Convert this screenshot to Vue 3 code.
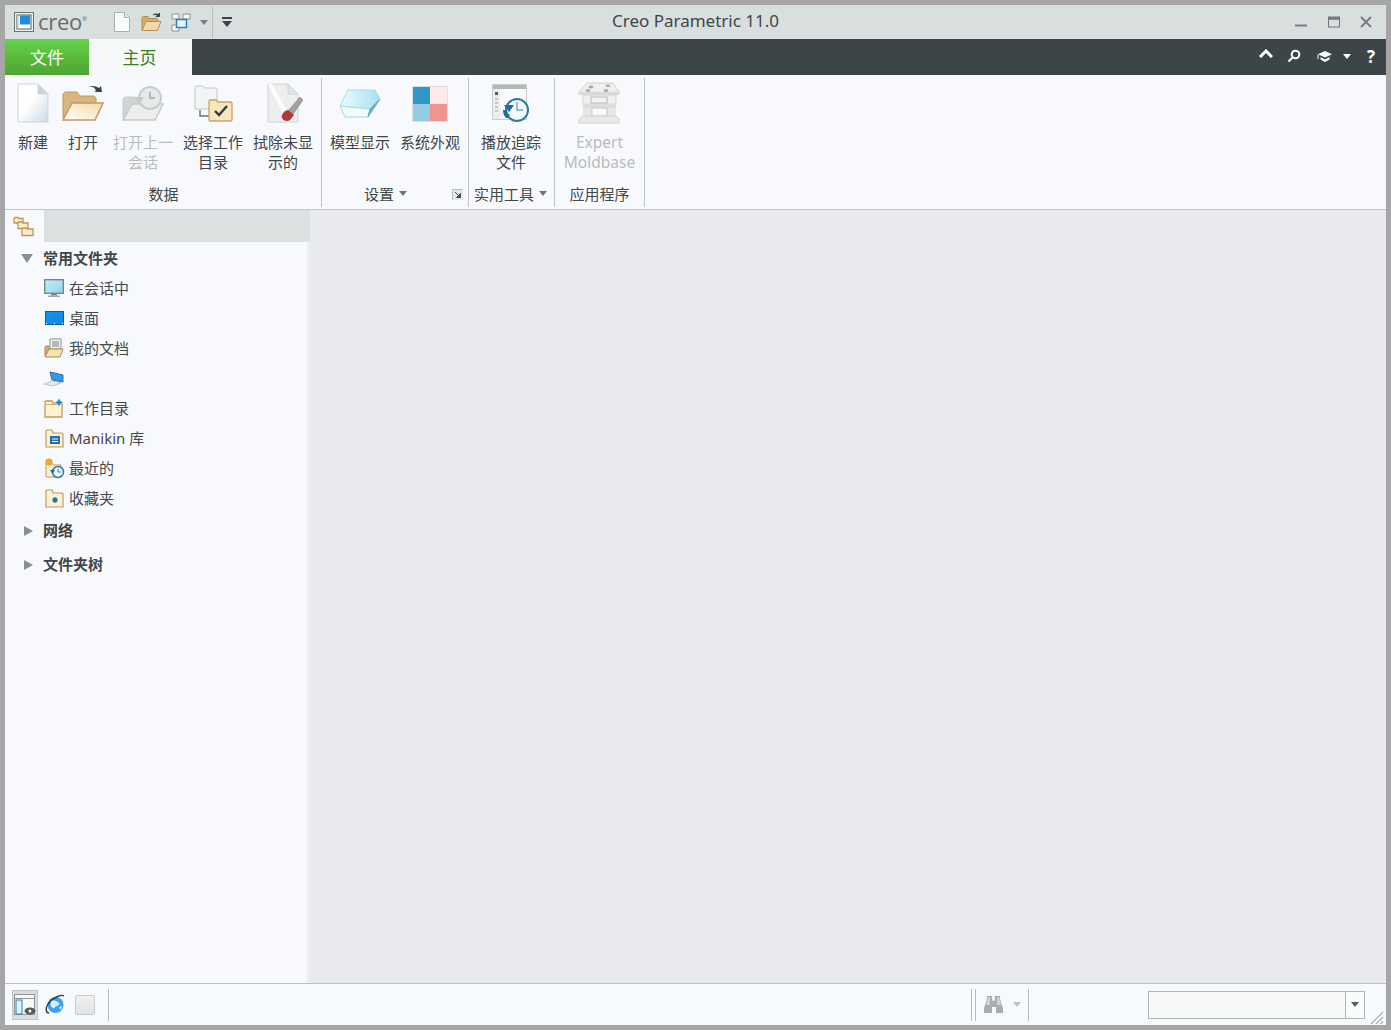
<script setup>
const data = [
  { icon: 'new', lines: ['新建'], w: 50 },
  { icon: 'open', lines: ['打开'], w: 50 },
  { icon: 'last', lines: ['打开上一', '会话'], w: 70, off: true },
  { icon: 'wd', lines: ['选择工作', '目录'], w: 70 },
  { icon: 'erase', lines: ['拭除未显', '示的'], w: 70 }
]
const items = [
  { icon: 'session', t: '在会话中' },
  { icon: 'desktop', t: '桌面' },
  { icon: 'docs', t: '我的文档' },
  { icon: 'pc', t: '' },
  { icon: 'work', t: '工作目录' },
  { icon: 'manikin', t: 'Manikin 库' },
  { icon: 'recent', t: '最近的' },
  { icon: 'fav', t: '收藏夹' }
]
</script>

<template>
  <div class="frame">
    <div class="win">
      <header class="titlebar">
        <div class="tb-left">
          <svg class="logo" width="20" height="20" viewBox="0 0 20 20">
            <rect x=".5" y=".5" width="19" height="19" fill="#eef1f1" stroke="#6c7274" />
            <rect x="3" y="3" width="14" height="14" fill="#fff" stroke="#50585a" />
            <rect x="6" y="3.500" width="10" height="9" fill="#1c8fd8" />
            <rect x="3.500" y="3.500" width="2" height="13" fill="#dfe3e3" />
          </svg>
          <span class="creo">creo<sup>®</sup></span>
          <svg class="qa q1" width="18" height="20" viewBox="0 0 18 20">
            <path d="M1.500.5h10l5 5v14h-15z" fill="#fbfcfc" stroke="#a9b0b2" />
            <path d="M11.500.5v5h5" fill="#dfe6ea" stroke="#a9b0b2" />
          </svg>
          <svg class="qa q2" width="21" height="20" viewBox="0 0 21 20">
            <path d="M1 18V5.500l1-1h5l1.500 2H16l1 1V10H6z" fill="#d4ad70" stroke="#b78f55" />
            <path d="M1 18.500 5 9.500h15l-3.500 9z" fill="#f3d9a7" stroke="#b78f55" />
            <path d="M12 3c2-1.500 4-1.500 5 0M15 4.500h3.500V1z" fill="#3d4345" stroke="#3d4345" />
          </svg>
          <svg class="qa q3" width="20" height="19" viewBox="0 0 20 19">
            <path d="M1 1h7v5H1zM12 1h7v5h-7zM1 12h7v6H1z" fill="#f6f7f7" stroke="#8b9092" />
            <rect x="5.500" y="6.500" width="10" height="8" fill="#e9f4fb" stroke="#2f7fb4" stroke-width="1.500" />
          </svg>
          <i class="tri small-tri"></i>
          <i class="qsep"></i>
          <span class="qmore"><i class="bar"></i><i class="tri dark"></i></span>
        </div>
        <div class="title">Creo Parametric 11.0</div>
        <div class="winbtns">
          <svg width="12" height="12" viewBox="0 0 12 12"><path d="M0 9.500h12" stroke="#777d7f" stroke-width="2" /></svg>
          <svg class="wmax" width="13" height="12" viewBox="0 0 13 12"><rect x=".5" y="1" width="11" height="10" fill="none" stroke="#6f7577" /><path d="M.5 2.500h11" stroke="#6f7577" stroke-width="2.500" /></svg>
          <svg width="12" height="12" viewBox="0 0 12 12"><path d="m1 1 10 10M11 1 1 11" stroke="#777d7f" stroke-width="2" /></svg>
        </div>
      </header>

      <nav class="tabs">
        <div class="tab file">文件</div>
        <div class="tab home">主页</div>
        <div class="tab-tools">
          <svg class="chev" width="14" height="9" viewBox="0 0 14 9"><path d="M1 8l6-6 6 6" fill="none" stroke="#fff" stroke-width="3" /></svg>
          <svg width="14" height="14" viewBox="0 0 14 14"><circle cx="8.500" cy="5.500" r="3.800" fill="none" stroke="#fff" stroke-width="2" /><path d="M5.500 8.500 1.500 12.500" stroke="#fff" stroke-width="2.200" /></svg>
          <svg class="cap" width="16" height="13" viewBox="0 0 16 13"><path d="m8 1 7 3.300-7 3.300-7-3.300z" fill="#fff" /><path d="M3.500 7v2.500L8 12l4.500-2.500V7L8 9.500z" fill="#fff" /><path d="M1 4.500V9" stroke="#fff" /></svg>
          <i class="tri white"></i>
          <span class="help">?</span>
        </div>
      </nav>

      <section class="ribbon">
        <div class="group g-data">
          <div class="btns">
            <div v-for="b in data" :key="b.icon" class="rbtn" :class="{ off: b.off }" :style="{ width: b.w + 'px' }">
              <div class="ric">
                <svg v-if="b.icon === 'new'" width="32" height="40" viewBox="0 0 32 40">
                  <defs><linearGradient id="ng" x1="0" y1="0" x2="1" y2="1"><stop offset=".45" stop-color="#fff" /><stop offset="1" stop-color="#c6dae4" /></linearGradient></defs>
                  <path d="M1 1h20l10 10v28H1z" fill="url(#ng)" stroke="#cfd4d6" />
                  <path d="M21 1v10h10z" fill="#c5d5e0" stroke="#cfd4d6" />
                </svg>
                <svg v-else-if="b.icon === 'open'" width="42" height="37" viewBox="0 0 42 37">
                  <path d="M1 33V9l2-2h12l3 4h14l2 2v7H12z" fill="#d9b67f" stroke="#c19a5e" />
                  <defs><linearGradient id="og" x1="0" y1="1" x2="1" y2="0"><stop offset="0" stop-color="#fff" /><stop offset="1" stop-color="#f2d9a9" /></linearGradient></defs>
                  <path d="M1 35 10 18h31l-8 17z" fill="url(#og)" stroke="#c19a5e" stroke-width="1.500" />
                  <path d="M26 2c4-1 7 0 8 4l-2 1h8l-1-6-2 2c-3-2-7-3-11-1z" fill="#3d4345" />
                </svg>
                <svg v-else-if="b.icon === 'last'" width="42" height="37" viewBox="0 0 42 37">
                  <path d="M1 33V14l2-2h10l3 4h18v6H12z" fill="#d2d5d6" stroke="#c6c9ca" />
                  <path d="M1 35l9-16h31l-8 16z" fill="#eceeee" stroke="#c6c9ca" stroke-width="1.500" />
                  <circle cx="28" cy="13" r="11" fill="#e7e8e9" stroke="#c9cccd" stroke-width="2" />
                  <path d="M28 7v6h5" fill="none" stroke="#b3b7b8" stroke-width="2" />
                  <path d="M12 12h10l-5 7z" fill="#c8cbcc" />
                </svg>
                <svg v-else-if="b.icon === 'wd'" width="40" height="37" viewBox="0 0 40 37">
                  <path d="M2 2l1-1h7l2 2h11l1 1v20H2z" fill="#f3f4f4" stroke="#c3c6c7" />
                  <path d="M7 25v6h9" fill="none" stroke="#6a7072" stroke-width="1.400" />
                  <path d="M16 19v-3l1-1h6l2 2h13l1 1v17l-1 1H17l-1-1z" fill="#f8e6bd" stroke="#c9a468" stroke-width="1.300" />
                  <path d="m22 26 4 4 8-9" fill="none" stroke="#35393b" stroke-width="2.400" />
                </svg>
                <svg v-else width="40" height="40" viewBox="0 0 40 40">
                  <path d="M5 1h20l10 10v28H5z" fill="#eeeeee" stroke="#d0d2d3" />
                  <path d="M25 1v10h10z" fill="#e2e5e6" stroke="#d0d2d3" />
                  <path d="M5 1h4l17 30-3 6z" fill="#fcfcfc" />
                  <path d="m25 28 12-14 3 3-10 14z" fill="#a5a19d" stroke="#7f7c7a" stroke-width=".600" />
                  <path d="m22 28 3-1 6 5-4 5c-2 2-7 1-8-2-1-2 1-5 3-7z" fill="#ae3a38" />
                </svg>
              </div>
              <div class="rlab"><div v-for="l in b.lines" :key="l">{{ l }}</div></div>
            </div>
          </div>
          <div class="glabel nudge">数据</div>
        </div>

        <div class="group g-set">
          <div class="btns">
            <div class="rbtn w70">
              <div class="ric">
                <svg width="40" height="31" viewBox="0 0 40 31">
                  <defs><linearGradient id="mg" x1="0" y1="0" x2="1" y2="0"><stop offset="0" stop-color="#eefafd" /><stop offset="1" stop-color="#a7e0f0" /></linearGradient></defs>
                  <path d="M0 18 8 2h27l5 9-10 10z" fill="url(#mg)" stroke="#a0dbe9" />
                  <path d="M0 18l30 3-2 8H5z" fill="#f2fbfd" stroke="#a0dbe9" />
                  <path d="M40 11 30 21l-2 8z" fill="#67adc4" stroke="#67adc4" />
                </svg>
              </div>
              <div class="rlab"><div>模型显示</div></div>
            </div>
            <div class="rbtn w70">
              <div class="ric">
                <div class="swatch"><i class="s1"></i><i class="s2"></i><i class="s3"></i><i class="s4"></i></div>
              </div>
              <div class="rlab"><div>系统外观</div></div>
            </div>
          </div>
          <div class="glabel set-label">
            <span class="set-text">设置<i class="tri g"></i></span>
            <svg class="launch" width="11" height="11" viewBox="0 0 11 11"><rect width="11" height="11" fill="#e4e7e9" /><path d="M.5 10.500V.5h10" fill="none" stroke="#b6babc" /><path d="M3 3l5 5M8.500 4.500v4h-4z" stroke="#444a4c" fill="#444a4c" /></svg>
          </div>
        </div>

        <div class="group g-util">
          <div class="btns center">
            <div class="rbtn w70 nudge">
              <div class="ric">
                <svg width="38" height="38" viewBox="0 0 38 38">
                  <rect x=".5" y=".5" width="34" height="35" fill="#fafafa" stroke="#c9cccd" />
                  <rect x="1" y="1" width="33" height="4" fill="#b5b8b9" />
                  <rect x="1" y="5" width="7" height="30" fill="#eceded" />
                  <rect x="3" y="8" width="3" height="3" fill="#55595b" />
                  <path d="M3 15h3M3 19h3M3 23h3M3 27h3" stroke="#9ea3a5" />
                  <circle cx="25" cy="26" r="11" fill="#f4f9fb" stroke="#2f7aa8" stroke-width="2" />
                  <path d="M25 18v8h6" fill="none" stroke="#78a8c4" stroke-width="1.500" />
                  <path d="M12 21h10l-5 7zM14 34c-2-2-3-5-3-8h4c0 3 1 4 3 5l-2 3z" fill="#1f6b9c" />
                </svg>
              </div>
              <div class="rlab"><div>播放追踪</div><div>文件</div></div>
            </div>
          </div>
          <div class="glabel nudge">实用工具<i class="tri g"></i></div>
        </div>

        <div class="group g-app">
          <div class="btns center">
            <div class="rbtn w88 off">
              <div class="ric">
                <svg class="mold" width="42" height="42" viewBox="0 0 42 42">
                  <path d="M9 1h26l6 9v2H1v-2z" fill="#eeefee" stroke="#cfd1d0" />
                  <path d="M1 10h40v3H1z" fill="#d8dad9" />
                  <ellipse cx="13" cy="5" rx="2.500" ry="1.500" fill="#a9acab" /><ellipse cx="30" cy="3.800" rx="2.500" ry="1.300" fill="#a9acab" />
                  <ellipse cx="10" cy="8.500" rx="2.500" ry="1.500" fill="#a9acab" /><ellipse cx="28" cy="8.500" rx="2.500" ry="1.500" fill="#a9acab" />
                  <rect x="5" y="13" width="33" height="9" fill="#eeefee" stroke="#d4d6d5" />
                  <rect x="13" y="15" width="16" height="6" fill="#f4f4f3" stroke="#bbbebd" />
                  <path d="M5 22h33v4H5z" fill="#dcdedd" />
                  <rect x="5" y="26" width="9" height="8" fill="#e6e7e6" />
                  <rect x="29" y="26" width="9" height="8" fill="#e6e7e6" />
                  <path d="M14 26h15v8H14z" fill="#fafafa" stroke="#c5c7c6" />
                  <path d="M5 34h33l4 4v3H1v-3z" fill="#e8e9e8" stroke="#d0d2d1" />
                </svg>
              </div>
              <div class="rlab latin"><div>Expert</div><div>Moldbase</div></div>
            </div>
          </div>
          <div class="glabel">应用程序</div>
        </div>
      </section>

      <main class="main">
        <aside class="side">
          <div class="side-tabs">
            <div class="stab">
              <svg width="21" height="21" viewBox="0 0 21 21">
                <g fill="#fbeccb" stroke="#bf9657" stroke-width="1.300">
                  <path d="M1 7V2.500l1-1h3l1 1h4v4.500z" /><path d="M5 12.500V7l1-1h3l1 1h5v5.500z" /><path d="M9 19.500V13l1-1h3l1 1h6v6.500z" />
                </g>
              </svg>
            </div>
            <div class="sfill"></div>
          </div>
          <div class="tree">
            <div class="thead first"><i class="open-tri"></i><b>常用文件夹</b></div>
            <div v-for="it in items" :key="it.icon" class="titem">
              <span class="tic">
                <svg v-if="it.icon === 'session'" width="20" height="18" viewBox="0 0 20 18">
                  <defs><linearGradient id="sg" x1="0" y1="0" x2="1" y2="1"><stop offset="0" stop-color="#c5ecfb" /><stop offset="1" stop-color="#8fd3f1" /></linearGradient></defs>
                  <rect x=".7" y=".7" width="18.600" height="13.600" fill="url(#sg)" stroke="#7d8588" stroke-width="1.400" /><path d="M7 15h6v1.500H7z" fill="#7d8588" /><path d="M4 17.200h12" stroke="#8d9497" stroke-width="1.200" />
                </svg>
                <svg v-else-if="it.icon === 'desktop'" width="19" height="14" viewBox="0 0 19 14">
                  <defs><linearGradient id="dg" x1="0" y1="0" x2="1" y2="1"><stop offset="0" stop-color="#1595ee" /><stop offset="1" stop-color="#1186e0" /></linearGradient></defs>
                  <rect x=".5" y=".5" width="18" height="13" fill="url(#dg)" stroke="#0f5f9f" /><path d="M1 12.500h17" stroke="#fff" stroke-dasharray="1 7" />
                </svg>
                <svg v-else-if="it.icon === 'docs'" width="20" height="20" viewBox="0 0 20 20">
                  <path d="M1 18V9l1-1h3v10z" fill="#d2ab6e" stroke="#b48d53" />
                  <path d="M6 1h11v10H6z" fill="#f3f4f4" stroke="#8b9092" /><path d="M8 4h7M8 6h7M8 8h7" stroke="#777c7e" />
                  <path d="M1 19l4-8h14l-3 8z" fill="#f7e0b2" stroke="#b48d53" />
                </svg>
                <svg v-else-if="it.icon === 'pc'" width="20" height="17" viewBox="0 0 20 17">
                  <path d="M6 2 19 5v7L8 10z" fill="#2d9bea" stroke="#3a6c93" />
                  <path d="M0 14l8-3 9 2-8 3z" fill="#e6e8e9" stroke="#c0c4c5" />
                </svg>
                <svg v-else-if="it.icon === 'work'" width="20" height="20" viewBox="0 0 20 20">
                  <path d="M1 5V4l1-1h6l1 2h8l1 1v13H1z" fill="#fdf2d4" stroke="#c19b60" stroke-width="1.300" />
                  <path d="M1 6.500h17" stroke="#d8b27a" />
                  <path d="m15 0 1.500 3 3 1.500-3 1.500-1.500 3-1.500-3-3-1.500 3-1.500z" fill="#1a88c7" stroke="#fff" stroke-width=".500" />
                </svg>
                <svg v-else-if="it.icon === 'manikin'" width="19" height="19" viewBox="0 0 19 19">
                  <path d="M1 4V2l1-1h5l1 3h9l1 1v13H1z" fill="#fcf1d5" stroke="#c19b60" stroke-width="1.200" />
                  <rect x="5" y="7" width="10" height="8" fill="#1f71a8" /><path d="M7 10h6M7 12.500h6" stroke="#fff" />
                </svg>
                <svg v-else-if="it.icon === 'recent'" width="21" height="21" viewBox="0 0 21 21">
                  <path d="M2 8V5h6l1 2h8v12H2z" fill="#fbf0d2" stroke="#c19b60" />
                  <circle cx="5" cy="4" r="3.300" fill="#f29a1c" /><path d="M5 0v8M1 4h8M2 1l6 6M8 1 2 7" stroke="#f2b132" stroke-width=".800" />
                  <circle cx="14" cy="14" r="5.500" fill="#f4f9fc" stroke="#2a79ab" stroke-width="1.500" /><path d="M14 10.500V14h3" fill="none" stroke="#2a79ab" /><path d="M6 12h5l-2.500 4z" fill="#1f6b9c" />
                </svg>
                <svg v-else width="19" height="19" viewBox="0 0 19 19">
                  <path d="M1 4V2l1-1h5l1 3h9l1 1v13H1z" fill="#fcf1d5" stroke="#c19b60" stroke-width="1.200" />
                  <path d="M10 8v6M7 11h6M8 9l4 4M12 9l-4 4" stroke="#1c6fa6" stroke-width="1.200" />
                </svg>
              </span>
              <span class="ttext">{{ it.t }}</span>
            </div>
            <div class="thead net"><i class="closed-tri"></i><b>网络</b></div>
            <div class="thead treehead"><i class="closed-tri"></i><b>文件夹树</b></div>
          </div>
        </aside>
        <div class="canvas"></div>
      </main>

      <footer class="status">
        <div class="st-left">
          <span class="st-box">
            <svg width="22" height="22" viewBox="0 0 22 22">
              <rect x=".5" y=".5" width="20" height="20" fill="#f8f8f8" stroke="#8f9496" /><path d="M1 4.500h19" stroke="#8f9496" /><rect x="2" y="6" width="6" height="14" fill="#dff1f9" stroke="#2a7fb5" />
              <ellipse cx="16" cy="17" rx="5.500" ry="3.500" fill="#55595b" /><circle cx="16" cy="17" r="1.500" fill="#fff" />
            </svg>
          </span>
          <svg class="globe" width="21" height="21" viewBox="0 0 21 21">
            <circle cx="10.500" cy="11" r="8" fill="#3ba3ec" /><path d="M6 7c3-2 5 0 7 1s2 3-1 4-2 3-4 2-3-3-2-7zM14 13l3-1-1 4z" fill="#d6eefc" />
            <path d="M19 2C16 0 7 4 3 10c-3 5-2 9 1 9" fill="none" stroke="#33393b" stroke-width="1.400" />
          </svg>
          <span class="st-square"></span>
          <i class="st-sep first-sep"></i>
        </div>
        <div class="st-right">
          <i class="st-sep"></i>
          <i class="st-sep near"></i>
          <svg class="bino" width="21" height="19" viewBox="0 0 21 19">
            <path d="M4 1h5v3l1 2h1l1-2V1h5v3l3 9v5h-7v-6H9v6H1v-5l3-9z" fill="#a9adae" />
            <path d="M5 2h2v8H3zM14 2h2l2 8h-4z" fill="#d0d3d4" />
          </svg>
          <i class="tri bino-tri"></i>
          <i class="st-sep after-bino"></i>
          <div class="combo"><div class="combo-field"></div><div class="combo-drop"><i class="tri dark2"></i></div></div>
          <svg class="grip" width="14" height="14" viewBox="0 0 14 14"><path d="M1 13 13 1M6 13l7-7M10.500 13l2.500-2.500" stroke="#a5aaac" stroke-width="1.200" /></svg>
        </div>
      </footer>
    </div>
  </div>
</template>

<style scoped>
.frame {
  width: 1391px;
  height: 1030px;
  box-sizing: border-box;
  padding: 5px;
  background: #a6a6a6;
  font-family: "Noto Sans CJK SC", "Noto Sans", sans-serif;
  color: #424849;
  font-size: 15px;
  overflow: hidden;
}
.win {
  height: 100%;
  display: flex;
  flex-direction: column;
  background: #f8f9fc;
}
i { display: block; }
.tri {
  width: 0;
  height: 0;
  border-left: 4.500px solid transparent;
  border-right: 4.500px solid transparent;
  border-top: 5px solid #777d7f;
}
.titlebar {
  height: 34px;
  flex: none;
  background: #d9dfdf;
  display: grid;
  grid-template-columns: 1fr auto 1fr;
  align-items: center;
}
.tb-left { display: flex; align-items: center; padding-left: 9px; }
.creo {
  font-family: "Open Sans", sans-serif;
  font-weight: 500;
  font-size: 22px;
  line-height: 24px;
  color: #666c6e;
  margin-left: 4px;
  margin-right: 1px;
  width: 59px;
  padding-bottom: 3px;
  letter-spacing: -.3px;
  white-space: nowrap;
}
.creo sup { font-size: 6px; vertical-align: 9px; line-height: 0; }
.q1 { margin-left: 15px; }
.q2 { margin-left: 10px; }
.q3 { margin-left: 9px; }
.small-tri { margin-left: 9px; }
.qsep { width: 1px; height: 32px; background: #b7bdbd; margin-left: 4px; }
.qmore { margin-left: 9px; width: 11px; }
.qmore .bar { width: 10px; height: 2px; background: #3e4446; margin: 0 0 2px; }
.tri.dark { border-top-color: #3e4446; border-left-width: 5px; border-right-width: 5px; border-top-width: 6px; }
.title {
  font-family: "Noto Sans", sans-serif;
  font-size: 17px;
  color: #3f4547;
  text-align: center;
  padding-bottom: 3px;
}
.winbtns { display: flex; justify-content: flex-end; align-items: center; gap: 21px; padding-right: 14px; }
.wmax { margin-right: -2px; }
.tabs {
  height: 36px;
  flex: none;
  background: #3c4648;
  display: flex;
}
.tab { display: flex; align-items: center; justify-content: center; font-size: 17px; padding-bottom: 2px; box-sizing: border-box; }
.file { width: 84px; color: #fff; background: linear-gradient(180deg, #66d24a 0%, #4da531 100%); }
.home { width: 103px; color: #3c7f25; background: #f7f8fa; padding-right: 2px; }
.tab-tools { flex: 1; display: flex; justify-content: flex-end; align-items: center; gap: 9px; padding: 0 11px 0 0; color: #fff; height: 34px; }
.chev { margin-right: 5px; margin-bottom: 6px; }
.cap { margin-left: 7px; }
.tab-tools .tri { border-top-color: #fff; margin-left: 1px; }
.help { font-family: "Open Sans", sans-serif; font-weight: 700; font-size: 17px; margin-left: 7px; line-height: 1; }
.ribbon {
  height: 135px;
  box-sizing: border-box;
  flex: none;
  display: flex;
  background: #f8f9fc;
  border-bottom: 1px solid #c2c6c6;
  padding-top: 3px;
}
.group {
  display: flex;
  flex-direction: column;
  box-sizing: border-box;
  height: 129px;
  border-right: 1px solid #bfc3c4;
}
.g-data { width: 317px; padding-left: 3px; }
.g-set { width: 147px; padding-left: 3px; }
.g-util { width: 86px; }
.g-app { width: 90px; }
.btns { display: flex; height: 105px; }
.btns.center { justify-content: center; }
.rbtn { display: flex; flex-direction: column; align-items: center; flex: none; }
.w70 { width: 70px; }
.w88 { width: 88px; }
.ric { height: 50px; display: flex; align-items: center; justify-content: center; }
.rlab { padding-top: 4px; text-align: center; line-height: 20px; font-size: 15px; white-space: nowrap; color: #3f4547; }
.off .rlab { color: #b9bcbd; }
.rlab.latin { font-family: "Noto Sans", sans-serif; font-size: 15.500px; line-height: 20px; }
.mold { margin-left: -2px; }
.glabel {
  flex: 1;
  display: flex;
  align-items: center;
  justify-content: center;
  font-size: 15px;
  white-space: nowrap;
  padding-bottom: 3px;
}
.glabel.nudge { padding-right: 2px; }
.rbtn.nudge { margin-right: 1px; }
.glabel .tri { display: inline-block; margin-left: 5px; }
.tri.g { border-top-color: #6d7375; }
.set-label { justify-content: space-between; padding: 0 5px 3px 37px; }
.set-text { display: flex; align-items: center; margin-left: 2px; }
.launch { margin-top: 2px; }
.swatch { width: 36px; height: 36px; display: grid; grid-template-columns: 1fr 1fr; grid-template-rows: 1fr 1fr; border: 1px solid #dcdddd; box-sizing: border-box; margin-top: 2px; }
.swatch i:nth-child(1) { background: #2f98c4; }
.swatch i:nth-child(2) { background: #fdeaea; }
.swatch i:nth-child(3) { background: #93cde4; }
.swatch i:nth-child(4) { background: #f0958d; }
.main { flex: 1; display: flex; min-height: 0; }
.side {
  width: 305px;
  flex: none;
  background: #f8f9fc;
  display: flex;
  flex-direction: column;
}
.side-tabs { height: 32px; display: flex; flex: none; }
.stab { width: 39px; display: flex; align-items: flex-start; padding: 6px 0 0 8px; box-sizing: border-box; }
.sfill { flex: 1; background: #dbe0e0; }
.tree { padding-top: 1px; flex: 1; border-right: 3px solid #eceef1; }
.thead { display: flex; align-items: center; height: 30px; }
.thead b { font-weight: 700; font-size: 15px; color: #414749; padding-bottom: 2px; }
.first { height: 30px; }
.open-tri { width: 0; height: 0; border-left: 6px solid transparent; border-right: 6px solid transparent; border-top: 9px solid #8a8f91; margin: 0 10px 0 16px; }
.closed-tri { width: 0; height: 0; border-top: 5.500px solid transparent; border-bottom: 5.500px solid transparent; border-left: 9px solid #8a8f91; margin: 2px 10px 0 19px; }
.titem { height: 30px; display: flex; align-items: center; color: #444a4c; font-size: 15px; }
.ttext { font-family: "Noto Sans", "Noto Sans CJK SC", sans-serif; padding-bottom: 2px; }
.tic { width: 21px; margin: 0 4.500px 0 38.500px; display: flex; justify-content: center; }
.net { margin-top: 2px; }
.treehead { margin-top: 4px; }
.canvas { flex: 1; background: #e9eaee; }
.status {
  height: 42px;
  flex: none;
  box-sizing: border-box;
  border-top: 1px solid #b8c4c4;
  background: #f6fafc;
  display: flex;
  justify-content: space-between;
  align-items: center;
}
.st-left, .st-right { display: flex; align-items: center; }
.st-left { padding-left: 7px; }
.st-box { width: 26px; height: 30px; box-sizing: border-box; background: #dcdcdc; border: 1px solid #c2c4c5; display: flex; align-items: center; justify-content: center; }
.globe { margin-left: 7px; }
.st-square { width: 20px; height: 20px; box-sizing: border-box; margin-left: 9px; background: linear-gradient(180deg, #f0f0f0, #e1e2e2); border: 1px solid #c8cbcc; border-radius: 2px; }
.st-sep { width: 1px; height: 32px; background: #b7bbbc; }
.first-sep { margin-left: 13px; }
.near { margin-left: 3px; }
.bino { margin-left: 7px; }
.bino-tri { margin-left: 9px; border-top-color: #bcc0c1; }
.after-bino { margin-left: 7px; }
.combo { display: flex; width: 217px; height: 28px; box-sizing: border-box; border: 1px solid #b2b6b7; margin-left: 119px; background: #f7f8f8; }
.combo-field { flex: 1; }
.combo-drop { width: 18px; border-left: 1px solid #b2b6b7; display: flex; align-items: center; justify-content: center; background: #f9fafa; }
.tri.dark2 { border-top-color: #555a5c; }
.grip { margin-left: 5px; margin-right: 2px; align-self: flex-end; margin-bottom: -4px; }
</style>
